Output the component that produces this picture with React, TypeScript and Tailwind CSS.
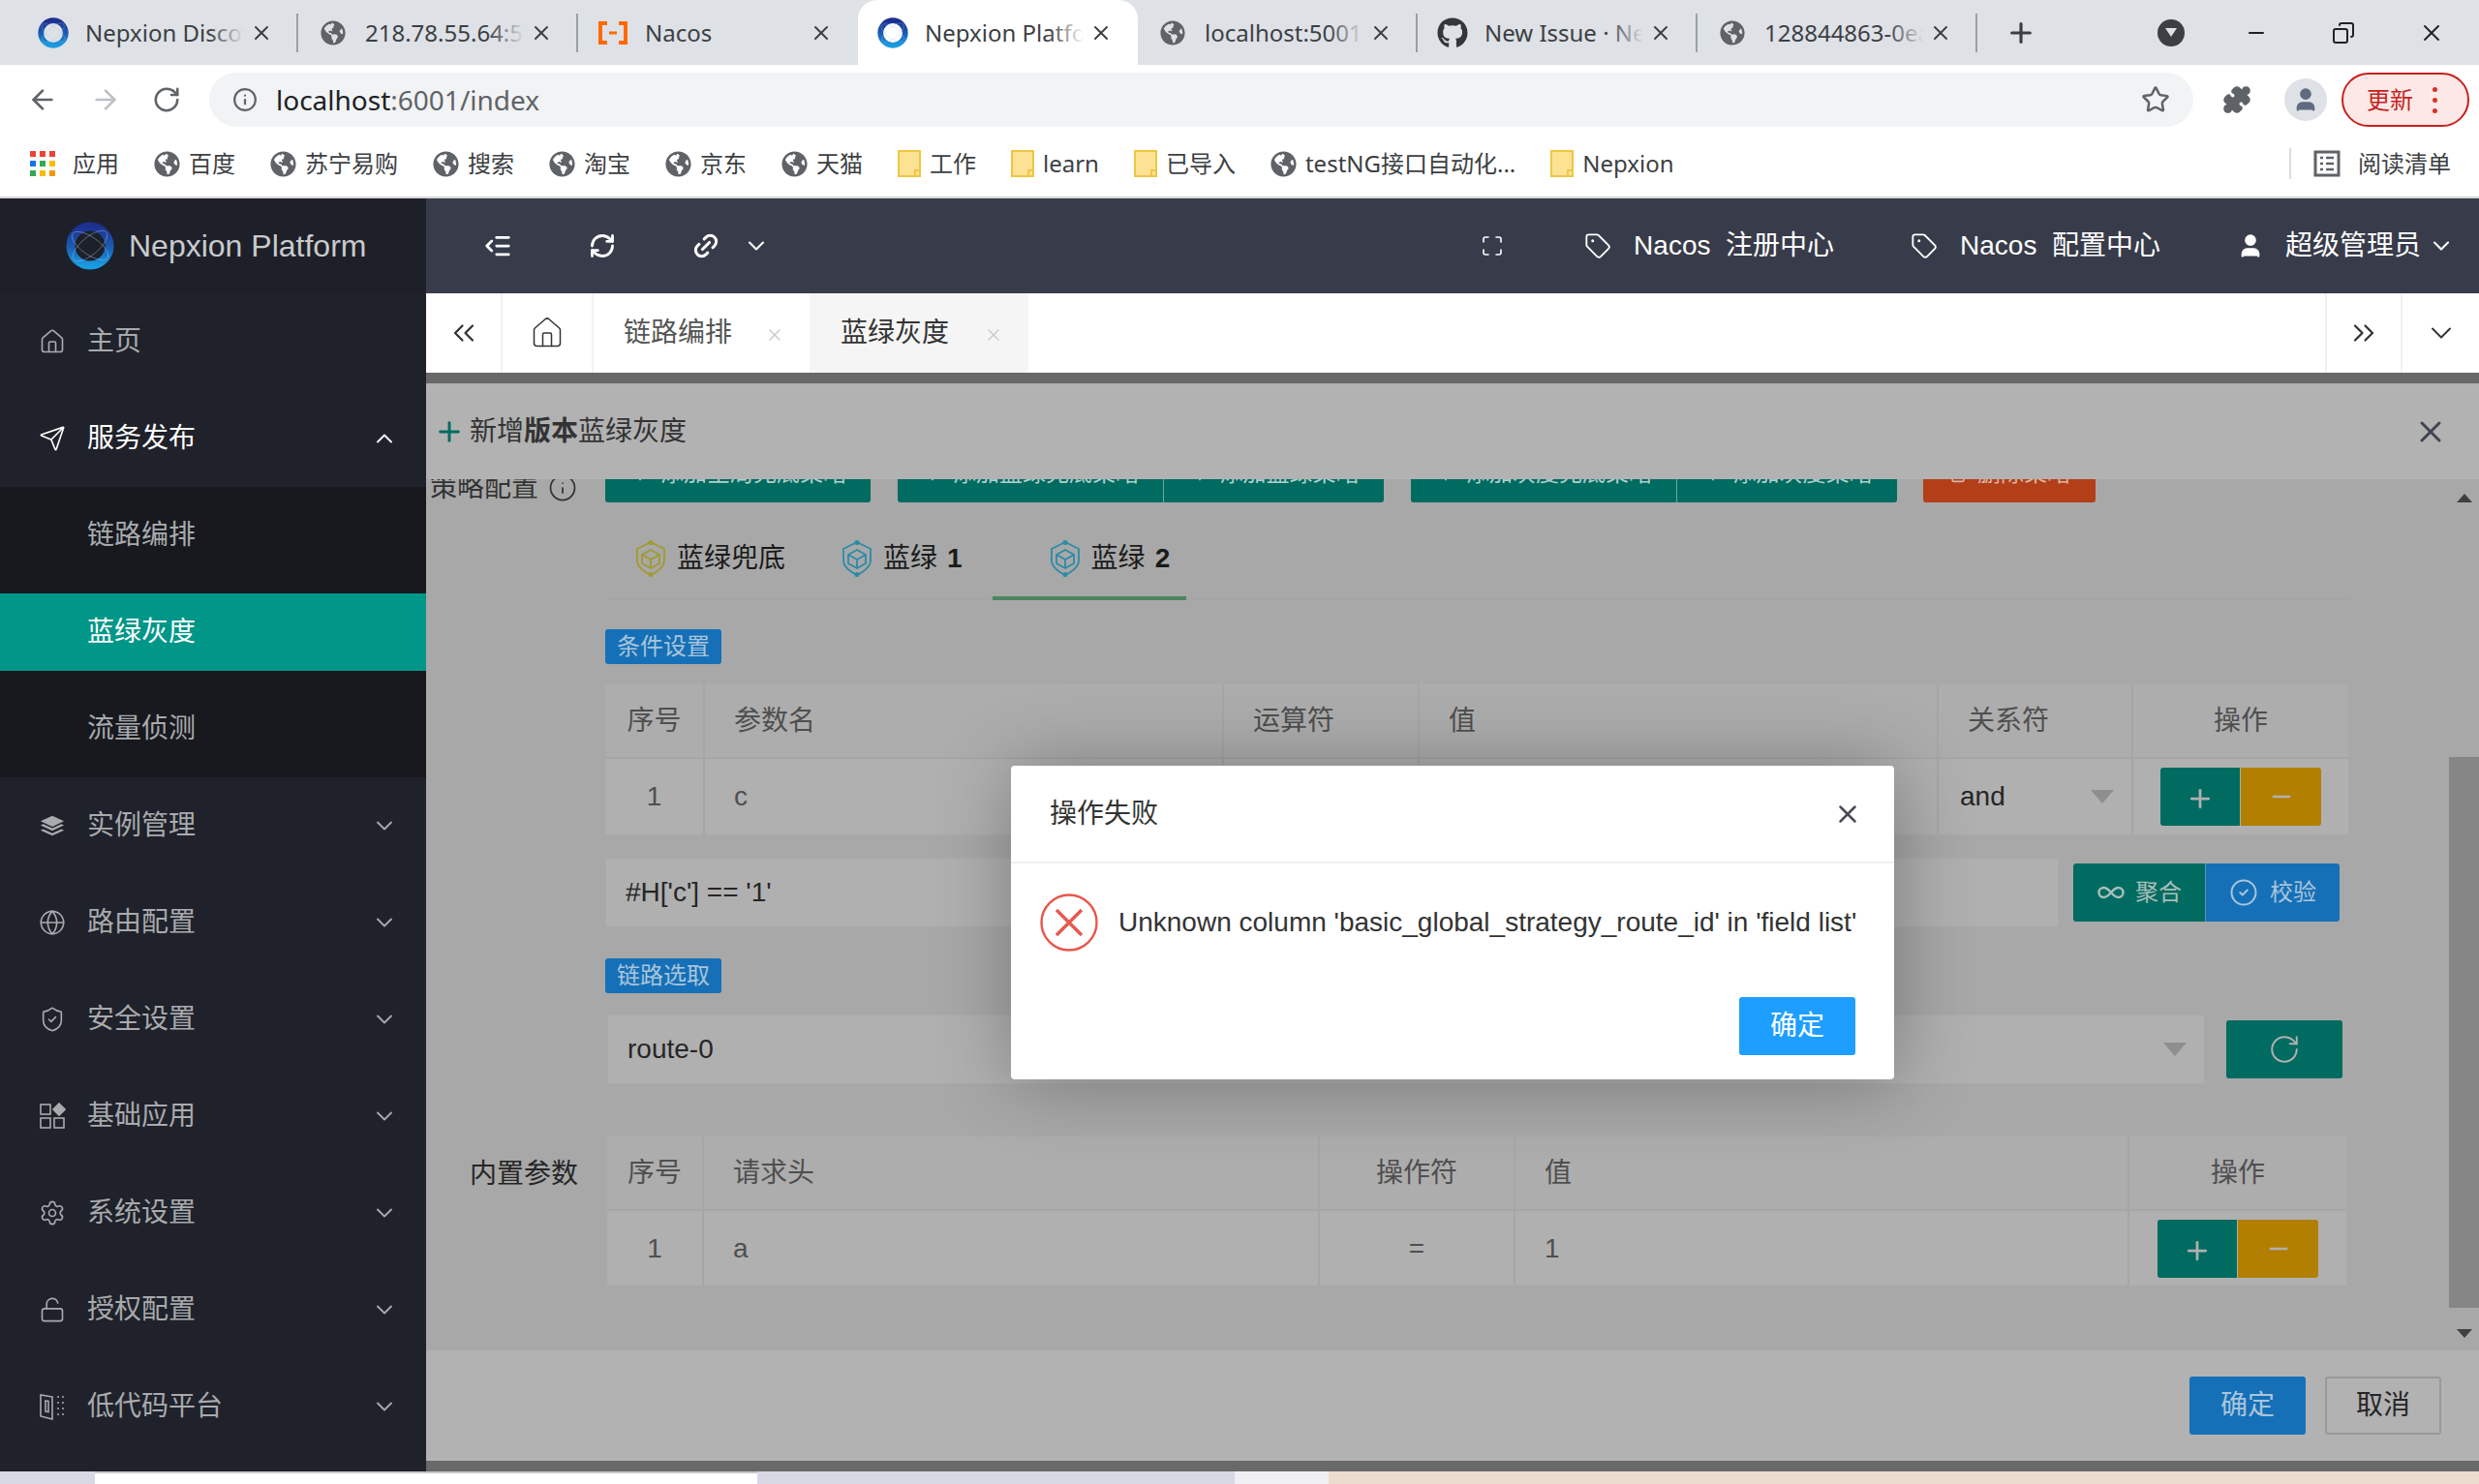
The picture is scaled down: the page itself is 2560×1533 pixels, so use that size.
import React from "react";
import { FaGithub, FaGlobeAmericas } from "react-icons/fa";
import {
  ArrowLeft, ArrowRight, RotateCw, Info, Star, Puzzle, User, Plus, Minus, X, House, Send, Globe, ShieldCheck,
  Settings, LockOpen, ChevronDown, ChevronUp, ChevronsLeft, ChevronsRight, RefreshCw, IndentDecrease, Link2,
  Maximize, Tag, Trash2, Infinity as InfinityIcon, CircleCheck, Copy,
} from "lucide-react";

const CHROME_FONT = "font-['Noto_Sans','Noto_Sans_CJK_SC',sans-serif]";
const PAGE_FONT = "font-['Liberation_Sans','Noto_Sans_CJK_SC',sans-serif]";

function NepxionLogo({ size }: { size: number }) {
  return (
    <svg width={size} height={size} viewBox="0 0 50 50" className="shrink-0">
      <defs>
        <linearGradient id="nepxionRing" x1="0" y1="0" x2="0" y2="1">
          <stop offset="0" stopColor="#1d2f8f" />
          <stop offset="0.55" stopColor="#1a5fb4" />
          <stop offset="1" stopColor="#1a9be0" />
        </linearGradient>
      </defs>
      <circle cx="25" cy="25" r="20" fill="none" stroke="url(#nepxionRing)" strokeWidth="9" />
      <ellipse cx="25" cy="25" rx="22" ry="9" fill="none" stroke="#9fc4ea" strokeWidth="0.7" transform="rotate(35 25 25)" opacity="0.6" />
      <ellipse cx="25" cy="25" rx="22" ry="9" fill="none" stroke="#9fc4ea" strokeWidth="0.7" transform="rotate(-40 25 25)" opacity="0.6" />
    </svg>
  );
}

function NacosLogo() {
  return (
    <svg width="32" height="24" viewBox="0 0 32 24" className="shrink-0" fill="none" stroke="#ff6a00" strokeWidth="4">
      <path d="M10 2H3v20h7" />
      <path d="M22 2h7v20h-7" />
      <path d="M12 12h8" strokeWidth="3" />
    </svg>
  );
}

const browserTabs = [
  { title: "Nepxion Discovery", icon: "nepxion" },
  { title: "218.78.55.64:5000", icon: "globe" },
  { title: "Nacos", icon: "nacos" },
  { title: "Nepxion Platform", icon: "nepxion", active: true },
  { title: "localhost:5001/", icon: "globe" },
  { title: "New Issue · Nepxion", icon: "github" },
  { title: "128844863-0ea", icon: "globe" },
];

function BrowserTab({ tab, showSep }: { tab: (typeof browserTabs)[number]; showSep: boolean }) {
  return (
    <div className={`relative flex h-[67px] w-[289px] shrink-0 items-center pl-[24px] ${tab.active ? "rounded-t-[20px] bg-white" : ""}`}>
      <span className="flex w-[24px] shrink-0 items-center justify-center">
        {tab.icon === "nepxion" && <NepxionLogo size={32} />}
        {tab.icon === "globe" && <FaGlobeAmericas className="h-[26px] w-[26px] shrink-0 text-[#5f6368]" />}
        {tab.icon === "nacos" && <NacosLogo />}
        {tab.icon === "github" && <FaGithub className="h-[32px] w-[32px] shrink-0 text-[#33373b]" />}
      </span>
      <span className="relative ml-[21px] w-[164px] overflow-hidden whitespace-nowrap text-[24px] text-[#3c4043]">
        {tab.title}
        <span className={`absolute inset-y-0 right-0 w-[36px] bg-gradient-to-r from-transparent ${tab.active ? "to-white" : "to-[#dee1e6]"}`} />
      </span>
      <X className="ml-[6px] h-[24px] w-[24px] shrink-0 text-[#3c4043]" strokeWidth={2} />
      {showSep && <span className="ml-auto h-[40px] w-[2px] bg-[#9aa0a6]" />}
    </div>
  );
}

function Bookmark({ label, kind }: { label: string; kind: "globe" | "folder" }) {
  return (
    <div className="flex items-center gap-[9px] whitespace-nowrap text-[24px] text-[#3c4043]">
      {kind === "globe" ? (
        <FaGlobeAmericas className="h-[27px] w-[27px] shrink-0 text-[#5f6368]" />
      ) : (
        <svg width="24" height="28" viewBox="0 0 24 28" className="shrink-0">
          <path d="M1 1h15l7 0v26H1z" fill="#fde293" stroke="#eec643" strokeWidth="2" />
          <path d="M18 27v-6h5" fill="none" stroke="#eec643" strokeWidth="2" />
        </svg>
      )}
      {label}
    </div>
  );
}

function BrowserChrome() {
  const bookmarks: { label: string; kind: "globe" | "folder" }[] = [
    { label: "百度", kind: "globe" },
    { label: "苏宁易购", kind: "globe" },
    { label: "搜索", kind: "globe" },
    { label: "淘宝", kind: "globe" },
    { label: "京东", kind: "globe" },
    { label: "天猫", kind: "globe" },
    { label: "工作", kind: "folder" },
    { label: "learn", kind: "folder" },
    { label: "已导入", kind: "folder" },
    { label: "testNG接口自动化...", kind: "globe" },
    { label: "Nepxion", kind: "folder" },
  ];
  const appColors = ["#ea4335", "#ea4335", "#ea4335", "#1a73e8", "#34a853", "#fbbc04", "#34a853", "#fbbc04", "#f29900"];

  return (
    <div className={`shrink-0 ${CHROME_FONT}`}>
      {/* tab strip */}
      <div className="flex h-[67px] items-center bg-[#dee1e6] pl-[19px]">
        {browserTabs.map((tab, idx) => (
          <BrowserTab key={idx} tab={tab} showSep={!tab.active && idx !== 2} />
        ))}
        <Plus className="ml-[29px] h-[32px] w-[32px] text-[#3c4043]" strokeWidth={2.4} />
        <span className="ml-[125px] flex h-[28px] w-[28px] items-center justify-center rounded-full bg-[#3c4043]">
          <span className="h-0 w-0 border-x-[6px] border-t-[9px] border-x-transparent border-t-[#dee1e6]" />
        </span>
        <Minus className="ml-[62px] h-[24px] w-[24px] text-[#202124]" strokeWidth={2} />
        <Copy className="ml-[66px] h-[24px] w-[24px] -scale-x-100 text-[#202124]" strokeWidth={2} />
        <X className="ml-[65px] h-[28px] w-[28px] text-[#202124]" strokeWidth={1.6} />
      </div>
      {/* toolbar */}
      <div className="flex h-[70px] items-start bg-white pt-[8px]">
        <div className="flex h-[56px] w-[216px] shrink-0 items-center pl-[28px] text-[#5f6368]">
          <ArrowLeft className="h-[32px] w-[32px]" strokeWidth={2} />
          <ArrowRight className="ml-[33px] h-[32px] w-[32px] text-[#bdc1c6]" strokeWidth={2} />
          <RotateCw className="ml-[32px] h-[30px] w-[30px]" strokeWidth={2} />
        </div>
        <div className="flex h-[56px] w-[2049px] items-center rounded-full bg-[#f1f3f4] pl-[24px] pr-[24px]">
          <Info className="h-[26px] w-[26px] text-[#5f6368]" strokeWidth={2} />
          <span className="ml-[19px] text-[28px] leading-none text-[#202124]">
            localhost<span className="text-[#5f6368]">:6001/index</span>
          </span>
          <Star className="ml-auto h-[30px] w-[30px] text-[#5f6368]" strokeWidth={2} />
        </div>
        <Puzzle className="ml-[30px] mt-[13px] h-[30px] w-[30px] fill-[#5f6368] text-[#5f6368]" />
        <span className="ml-[34px] mt-[6px] flex h-[44px] w-[44px] items-center justify-center rounded-full bg-[#dee1e6]">
          <User className="h-[28px] w-[28px] fill-[#5f6b80] text-[#5f6b80]" />
        </span>
        <div className="ml-[15px] flex h-[56px] w-[132px] items-center rounded-full border-2 border-[#c5221f] bg-[#fce8e6] pl-[24px] text-[24px] text-[#c5221f]">
          更新
          <span className="ml-[20px] flex flex-col gap-[6px]">
            <span className="h-[5px] w-[5px] rounded-full bg-[#d93025]" />
            <span className="h-[5px] w-[5px] rounded-full bg-[#d93025]" />
            <span className="h-[5px] w-[5px] rounded-full bg-[#d93025]" />
          </span>
        </div>
      </div>
      {/* bookmarks */}
      <div className="flex h-[66px] items-center gap-[36px] bg-white pl-[31px] pb-[2px]">
        <div className="flex items-center gap-[18px] text-[24px] text-[#3c4043]">
          <span className="grid grid-cols-3 gap-[4px]">
            {appColors.map((c, i) => (
              <span key={i} className="h-[6px] w-[6px]" style={{ backgroundColor: c }} />
            ))}
          </span>
          应用
        </div>
        {bookmarks.map((b) => (
          <Bookmark key={b.label} label={b.label} kind={b.kind} />
        ))}
        <div className="ml-auto flex items-center pr-[29px] text-[24px] text-[#3c4043]">
          <span className="h-[32px] w-[2px] bg-[#dadce0]" />
          <svg width="28" height="28" viewBox="0 0 28 28" className="ml-[23px]" fill="none" stroke="#5f6368" strokeWidth="3">
            <rect x="2" y="2" width="24" height="24" />
            <path d="M7 8h3M13 8h8M7 14h3M13 14h8M7 20h3M13 20h8" strokeWidth="2.4" />
          </svg>
          <span className="ml-[18px]">阅读清单</span>
        </div>
      </div>
      <div className="h-[2px] bg-[#d5d6d9]" />
    </div>
  );
}

function LayersSolid() {
  return (
    <svg width="30" height="30" viewBox="0 0 30 30" fill="#a9aaad">
      <path d="M15 4l13 6-13 6-13-6z" />
      <path d="M2 14.5l3-1.3 10 4.6 10-4.6 3 1.3-13 6z" />
      <path d="M2 20l3-1.3 10 4.6 10-4.6 3 1.3-13 6z" />
    </svg>
  );
}

function AppsIcon() {
  return (
    <svg width="28" height="28" viewBox="0 0 28 28" fill="none" stroke="#a9aaad" strokeWidth="1.6">
      <rect x="2" y="2" width="10" height="10" />
      <rect x="2" y="16" width="10" height="10" />
      <rect x="16" y="16" width="10" height="10" />
      <path d="M21 1l6 6-6 6-6-6z" fill="#a9aaad" />
    </svg>
  );
}

function LowCodeIcon() {
  return (
    <svg width="28" height="28" viewBox="0 0 28 28" fill="none" stroke="#a9aaad" strokeWidth="1.6">
      <path d="M14 4L2 2v22l12 3z" />
      <path d="M7 8l3 .5v11L7 19z" />
      <path d="M19 4h2M24 4h2M19 10h2M24 10h2M19 16h2M24 16h2M19 22h2M24 22h2" />
    </svg>
  );
}

const menuIconClass = "h-[28px] w-[28px] text-[#a9aaad]";

function MenuRow({ icon, label, open }: { icon: React.ReactNode; label: string; open?: boolean }) {
  return (
    <div className={`flex h-[100px] shrink-0 items-center pl-[40px] pr-[29px] text-[28px] ${open ? "text-white" : "text-[#a9aaad]"}`}>
      <span className="flex w-[28px] justify-center">{icon}</span>
      <span className="ml-[22px]">{label}</span>
      {open ? (
        <ChevronUp className="ml-auto h-[28px] w-[28px] text-white" strokeWidth={1.6} />
      ) : (
        <ChevronDown className="ml-auto h-[28px] w-[28px] text-[#a9aaad]" strokeWidth={1.6} />
      )}
    </div>
  );
}

function Sidebar() {
  return (
    <aside className={`flex w-[440px] shrink-0 flex-col bg-[#1f222b] ${PAGE_FONT}`}>
      <div className="flex h-[98px] shrink-0 items-center bg-[#1d2029] pl-[68px]">
        <NepxionLogo size={50} />
        <span className="ml-[15px] text-[32px] text-[#c9cacc]">Nepxion Platform</span>
      </div>
      <div className="flex h-[100px] shrink-0 items-center pl-[40px] text-[28px] text-[#a9aaad]">
        <House className={menuIconClass} strokeWidth={1.4} />
        <span className="ml-[22px]">主页</span>
      </div>
      <MenuRow icon={<Send className="h-[28px] w-[28px] text-white" strokeWidth={1.4} />} label="服务发布" open />
      <div className="shrink-0 bg-[#17191f] text-[28px] text-[#a9aaad]">
        <div className="flex h-[100px] items-center pl-[90px]">链路编排</div>
        <div className="flex h-[100px] items-center">
          <div className="flex h-[80px] w-full items-center bg-[#009688] pl-[90px] text-white">蓝绿灰度</div>
        </div>
        <div className="flex h-[100px] items-center pl-[90px]">流量侦测</div>
      </div>
      <MenuRow icon={<LayersSolid />} label="实例管理" />
      <MenuRow icon={<Globe className={menuIconClass} strokeWidth={1.4} />} label="路由配置" />
      <MenuRow icon={<ShieldCheck className={menuIconClass} strokeWidth={1.4} />} label="安全设置" />
      <MenuRow icon={<AppsIcon />} label="基础应用" />
      <MenuRow icon={<Settings className={menuIconClass} strokeWidth={1.4} />} label="系统设置" />
      <MenuRow icon={<LockOpen className={menuIconClass} strokeWidth={1.4} />} label="授权配置" />
      <MenuRow icon={<LowCodeIcon />} label="低代码平台" />
    </aside>
  );
}

function TopBar() {
  return (
    <div className="flex h-[98px] shrink-0 items-center bg-[#383c4a] text-[28px] text-white">
      <IndentDecrease className="ml-[59px] h-[30px] w-[30px]" strokeWidth={2.2} />
      <RefreshCw className="ml-[79px] h-[28px] w-[28px]" strokeWidth={2.4} />
      <Link2 className="ml-[78px] h-[30px] w-[30px] -rotate-45" strokeWidth={2.4} />
      <ChevronDown className="ml-[23px] h-[28px] w-[28px]" strokeWidth={1.8} />
      <Maximize className="ml-auto h-[24px] w-[24px]" strokeWidth={1.6} />
      <Tag className="ml-[83px] h-[28px] w-[28px]" strokeWidth={1.6} />
      <span className="ml-[23px] whitespace-pre">Nacos  注册中心</span>
      <Tag className="ml-[79px] h-[28px] w-[28px]" strokeWidth={1.6} />
      <span className="ml-[23px] whitespace-pre">Nacos  配置中心</span>
      <User className="ml-[79px] h-[28px] w-[28px] fill-white" />
      <span className="ml-[22px]">超级管理员</span>
      <ChevronDown className="ml-[7px] mr-[25px] h-[28px] w-[28px]" strokeWidth={1.8} />
    </div>
  );
}

function PageTabs() {
  return (
    <div className="flex h-[82px] shrink-0 items-stretch bg-white text-[28px] text-[#333]">
      <div className="flex w-[79px] items-center justify-center border-r-2 border-[#f2f2f2]">
        <ChevronsLeft className="h-[36px] w-[36px]" strokeWidth={1.5} />
      </div>
      <div className="flex w-[94px] items-center justify-center border-r-2 border-[#f2f2f2]">
        <House className="h-[36px] w-[36px]" strokeWidth={1} />
      </div>
      <div className="flex w-[223px] items-center pl-[31px] text-[#555]">
        链路编排
        <X className="ml-[34px] mt-[4px] h-[20px] w-[20px] text-[#c9c9c9]" strokeWidth={1.6} />
      </div>
      <div className="flex w-[226px] items-center bg-[#f5f5f5] pl-[32px]">
        蓝绿灰度
        <X className="ml-[36px] mt-[4px] h-[20px] w-[20px] text-[#c9c9c9]" strokeWidth={1.6} />
      </div>
      <div className="ml-auto flex w-[80px] items-center justify-center border-x-2 border-[#f2f2f2]">
        <ChevronsRight className="h-[36px] w-[36px]" strokeWidth={1.5} />
      </div>
      <div className="flex w-[79px] items-center justify-center">
        <ChevronDown className="h-[36px] w-[36px]" strokeWidth={1.3} />
      </div>
    </div>
  );
}

function TealButton({ label, className }: { label: string; className: string }) {
  return (
    <div className={`flex h-[60px] items-center justify-center gap-[10px] whitespace-nowrap bg-[#006b60] text-[24px] text-[#b0cfcb] ${className}`}>
      <Plus className="h-[22px] w-[22px]" strokeWidth={2} />
      {label}
    </div>
  );
}

function ShieldCube({ color }: { color: string }) {
  return (
    <svg width="34" height="38" viewBox="0 0 34 38" fill="none" stroke={color} strokeWidth="1.8" className="shrink-0">
      <path d="M17 2l14 7v12c0 6-7 12-14 15C10 33 3 27 3 21V9z" />
      <path d="M17 10l9 5v9l-9 5-9-5v-9z" />
      <path d="M8 15l9 5 9-5M17 20v9" />
      <circle cx="17" cy="2.5" r="1.6" fill={color} />
      <circle cx="17" cy="35.5" r="1.6" fill={color} />
    </svg>
  );
}

function BlockTag({ label }: { label: string }) {
  return (
    <div className="flex h-[36px] w-[120px] items-center justify-center rounded-[3px] bg-[#1670b7] text-[24px] text-[#a9c5db]">
      {label}
    </div>
  );
}

function PlusMinus() {
  return (
    <div className="flex h-[60px] w-[166px] overflow-hidden rounded-[3px]">
      <div className="flex h-full w-[83px] items-center justify-center border-r border-[#a9b0a0] bg-[#006b60]">
        <Plus className="mt-[4px] h-[30px] w-[30px] text-[#b0b0b0]" strokeWidth={2.2} />
      </div>
      <div className="flex h-full flex-1 items-center justify-center bg-[#b37f00]">
        <Minus className="h-[28px] w-[28px] text-[#b0b0b0]" strokeWidth={2.2} />
      </div>
    </div>
  );
}

function Caret() {
  return <span className="h-0 w-0 border-x-[12px] border-t-[14px] border-x-transparent border-t-[#8e8e8e]" />;
}

function HeadCell({ label, center }: { label: string; center?: boolean }) {
  return (
    <div className={`flex items-center bg-[#adadad] text-[#4f4f4f] ${center ? "justify-center" : "pl-[30px]"}`}>{label}</div>
  );
}

function BodyCell({ children, center }: { children?: React.ReactNode; center?: boolean }) {
  return (
    <div className={`flex items-center bg-[#b0b0b0] text-[#4f4f4f] ${center ? "justify-center" : "pl-[30px]"}`}>{children}</div>
  );
}

function BoxField({ className, children }: { className: string; children?: React.ReactNode }) {
  return (
    <div className={`flex items-center rounded-[3px] border border-[#aaaaaa] bg-[#b0b0b0] pl-[20px] text-[#262626] ${className}`}>
      {children}
    </div>
  );
}

function DrawerBody() {
  return (
    <div className="flex h-[900px] shrink-0 overflow-hidden bg-[#a8a8a8] text-[28px]">
      <div className="flex-1 overflow-hidden">
        {/* scrolled past the top edge, so the first row is cut by the header */}
        <div className="-mt-[36px] flex flex-col">
          <div className="flex h-[60px] items-start">
            <div className="flex w-[185px] shrink-0 items-center pl-[4px] pt-[24px] text-[#333]">
              策略配置
              <Info className="ml-[10px] h-[30px] w-[30px]" strokeWidth={1.4} />
            </div>
            <div className="flex">
              <TealButton label="添加全局兜底策略" className="w-[274px] rounded-b-[3px]" />
              <TealButton label="添加蓝绿兜底策略" className="ml-[28px] w-[275px] rounded-bl-[3px] border-r border-[#6fa59f]" />
              <TealButton label="添加蓝绿策略" className="w-[227px] rounded-br-[3px]" />
              <TealButton label="添加灰度兜底策略" className="ml-[28px] w-[275px] rounded-bl-[3px] border-r border-[#6fa59f]" />
              <TealButton label="添加灰度策略" className="w-[227px] rounded-br-[3px]" />
              <div className="ml-[27px] flex h-[60px] w-[178px] items-center justify-center gap-[10px] rounded-b-[3px] bg-[#b33f19] text-[24px] text-[#dcb4a6]">
                <Trash2 className="h-[20px] w-[20px]" strokeWidth={2} />
                删除策略
              </div>
            </div>
          </div>

          <div className="ml-[185px] w-[1802px]">
            {/* strategy tabs */}
            <div className="mt-[17px] flex h-[84px] items-center border-b-2 border-[#a5a5a5] text-[#1a1a1a]">
              <div className="ml-[30px] flex items-center gap-[10px]">
                <ShieldCube color="#a29a2c" />
                蓝绿兜底
              </div>
              <div className="ml-[57px] flex items-center gap-[10px]">
                <ShieldCube color="#2b8ba8" />
                蓝绿<b className="font-bold">1</b>
              </div>
              <div className="ml-[89px] flex items-center gap-[10px]">
                <ShieldCube color="#2b8ba8" />
                蓝绿<b className="font-bold">2</b>
              </div>
            </div>
            <div className="-mt-[4px] ml-[400px] h-[4px] w-[200px] bg-[#4c8560]" />

            <div className="mt-[30px]">
              <BlockTag label="条件设置" />
            </div>

            {/* condition table */}
            <div className="mt-[21px] grid h-[155px] w-[1800px] grid-cols-[101px_534px_200px_534px_199px_222px] grid-rows-[75px_78px] gap-[2px] bg-[#a6a6a6]">
              <HeadCell label="序号" center />
              <HeadCell label="参数名" />
              <HeadCell label="运算符" />
              <HeadCell label="值" />
              <HeadCell label="关系符" />
              <HeadCell label="操作" center />
              <BodyCell center>1</BodyCell>
              <BodyCell>c</BodyCell>
              <BodyCell />
              <BodyCell />
              <div className="flex items-center justify-between bg-[#b0b0b0] pl-[22px] pr-[18px] text-[#262626]">
                and
                <Caret />
              </div>
              <div className="flex items-center justify-center bg-[#b0b0b0]">
                <PlusMinus />
              </div>
            </div>

            {/* expression */}
            <div className="mt-[24px] flex items-center">
              <BoxField className="h-[72px] w-[1501px]">#H['c'] == '1'</BoxField>
              <div className="ml-[15px] flex h-[60px] overflow-hidden rounded-[3px] text-[24px] text-[#a9bdb9]">
                <div className="flex w-[137px] items-center justify-center gap-[10px] border-r border-[#5c93ba] bg-[#006b60]">
                  <InfinityIcon className="h-[30px] w-[30px]" strokeWidth={2} />
                  聚合
                </div>
                <div className="flex w-[138px] items-center justify-center gap-[12px] bg-[#1670b7] text-[#a9c5db]">
                  <CircleCheck className="h-[30px] w-[30px]" strokeWidth={1.6} />
                  校验
                </div>
              </div>
            </div>

            <div className="mt-[32px]">
              <BlockTag label="链路选取" />
            </div>

            {/* route select */}
            <div className="mt-[22px] flex items-center pl-[2px]">
              <BoxField className="h-[72px] w-[1650px] justify-between pr-[18px]">
                route-0
                <Caret />
              </BoxField>
              <div className="ml-[22px] flex h-[60px] w-[120px] items-center justify-center rounded-[3px] bg-[#006b60]">
                <RotateCw className="h-[34px] w-[34px] text-[#b0b0b0]" strokeWidth={1.4} />
              </div>
            </div>
          </div>

          {/* built-in parameters */}
          <div className="mt-[54px] flex">
            <div className="flex h-[77px] w-[187px] shrink-0 items-center pl-[45px] text-[#262626]">内置参数</div>
            <div className="grid h-[154px] w-[1796px] grid-cols-[98px_634px_200px_632px_224px] grid-rows-[75px_77px] gap-[2px] bg-[#a6a6a6]">
              <HeadCell label="序号" center />
              <HeadCell label="请求头" />
              <HeadCell label="操作符" center />
              <HeadCell label="值" />
              <HeadCell label="操作" center />
              <BodyCell center>1</BodyCell>
              <BodyCell>a</BodyCell>
              <BodyCell center>=</BodyCell>
              <BodyCell>1</BodyCell>
              <div className="flex items-center justify-center bg-[#b0b0b0]">
                <PlusMinus />
              </div>
            </div>
          </div>
        </div>
      </div>

      {/* scrollbar */}
      <div className="flex w-[31px] shrink-0 flex-col items-center">
        <span className="mt-[15px] h-0 w-0 border-x-[8px] border-b-[9px] border-x-transparent border-b-[#3f3f3f]" />
        <div className="mt-[263px] h-[569px] w-full bg-[#868686]" />
        <span className="mt-[22px] h-0 w-0 border-x-[8px] border-t-[9px] border-x-transparent border-t-[#3f3f3f]" />
      </div>
    </div>
  );
}

function Drawer() {
  return (
    <div className="flex flex-1 flex-col">
      <div className="h-[11px] shrink-0 bg-[#696969]" />
      <div className="flex h-[99px] shrink-0 items-center bg-[#b2b2b2] pl-[8px] pr-[32px] text-[28px] text-[#333]">
        <Plus className="h-[32px] w-[32px] text-[#006b60]" strokeWidth={2.2} />
        <span className="ml-[5px]">
          新增<b className="font-bold">版本</b>蓝绿灰度
        </span>
        <X className="ml-auto h-[36px] w-[36px] text-[#3f4450]" strokeWidth={2} />
      </div>
      <DrawerBody />
      <div className="flex h-[114px] shrink-0 items-center justify-end gap-[20px] bg-[#b2b2b2] pr-[39px] text-[28px]">
        <div className="flex h-[60px] w-[120px] items-center justify-center rounded-[3px] bg-[#1670b7] text-[#a9c5db]">确定</div>
        <div className="flex h-[60px] w-[120px] items-center justify-center rounded-[3px] border-2 border-[#999] text-[#262626]">取消</div>
      </div>
      <div className="h-[11px] shrink-0 bg-[#696969]" />
    </div>
  );
}

function ErrorDialog() {
  return (
    <div className={`absolute left-[1044px] top-[791px] h-[324px] w-[912px] rounded-[4px] bg-white shadow-[2px_2px_80px_rgba(0,0,0,0.3)] ${PAGE_FONT}`}>
      <div className="flex h-[101px] items-center justify-between border-b-2 border-[#f0f0f0] pl-[40px] pr-[33px] text-[28px] text-[#333]">
        操作失败
        <X className="h-[30px] w-[30px] text-[#4a4a55]" strokeWidth={2} />
      </div>
      <div className="flex h-[122px] items-center pl-[30px] text-[28px] text-[#333]">
        <svg width="60" height="60" viewBox="0 0 60 60" fill="none" stroke="#e8574d" className="shrink-0">
          <circle cx="30" cy="30" r="28.5" strokeWidth="2.4" />
          <path d="M17 17l26 26M43 17L17 43" strokeWidth="3.4" />
        </svg>
        <span className="ml-[21px] whitespace-nowrap">Unknown column 'basic_global_strategy_route_id' in 'field list'</span>
      </div>
      <div className="flex justify-end pr-[40px] pt-[16px]">
        <div className="flex h-[60px] w-[120px] items-center justify-center rounded-[3px] bg-[#1e9fff] text-[28px] text-white">确定</div>
      </div>
    </div>
  );
}

export default function App() {
  return (
    <div className="relative flex h-[1533px] w-[2560px] flex-col overflow-hidden bg-white">
      <BrowserChrome />
      <div className="flex h-[1315px] shrink-0">
        <Sidebar />
        <div className={`flex min-w-0 flex-1 flex-col ${PAGE_FONT}`}>
          <TopBar />
          <PageTabs />
          <Drawer />
        </div>
      </div>
      {/* desktop showing below the browser window */}
      <div className="flex flex-1 bg-[#d9d8e5]">
        <div className="w-[98px]" />
        <div className="w-[684px] border-t-2 border-[#c8c8c8] bg-white" />
        <div className="w-[493px]" />
        <div className="w-[97px] bg-[#f0eff4]" />
        <div className="flex-1 bg-[#ecdccf]" />
      </div>
      <ErrorDialog />
    </div>
  );
}
